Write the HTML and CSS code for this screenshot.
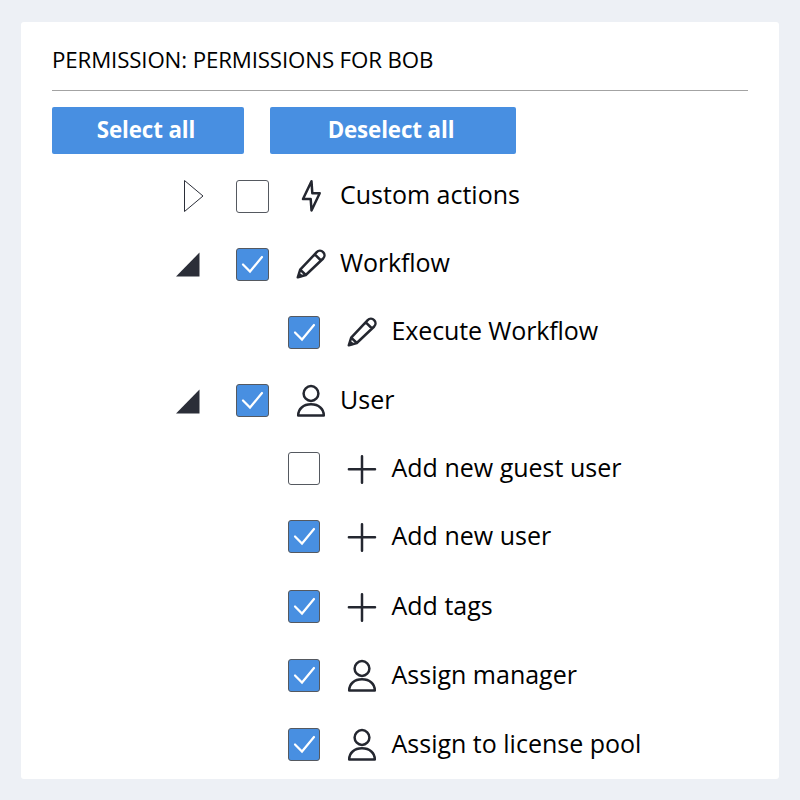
FILE: index.html
```html
<!DOCTYPE html>
<html lang="en">
<head>
<meta charset="utf-8">
<title>Permissions</title>
<link rel="stylesheet" href="styles.css">
</head>
<body>
<svg class="defs" aria-hidden="true">
  <symbol id="check" viewBox="0 0 33 33"><path d="M7 16.500 14 23.500 26 9"/></symbol>
  <symbol id="bolt" viewBox="0 0 34 34"><path d="M17.500 2.300 9 20H16.700L17.500 31.500 25.700 14.200H18.300Z"/></symbol>
  <symbol id="pencil" viewBox="0 0 34 34"><path d="M3.800 30.300 6.200 22.700 22.700 5.200A4.500 4.500 0 0 1 29.200 11.500L11.800 28ZM6.200 22.700 11.800 28M20.800 7.400 27 13.500M3.800 30.300 7.600 29.200 5 26.800Z"/></symbol>
  <symbol id="user" viewBox="0 0 34 34"><circle cx="17" cy="9.500" r="7.400"/><path d="M4.200 31.400C4.200 25 9.200 20.300 17 20.300S29.800 25 29.800 31.400Z"/></symbol>
  <symbol id="plus" viewBox="0 0 34 34"><path d="M17 4.200V30.700M3.900 17.300H30"/></symbol>
</svg>
<main class="card">
  <h1 class="title">PERMISSION: PERMISSIONS FOR BOB</h1>
  <div class="actions">
    <button class="btn btn-select">Select all</button>
    <button class="btn btn-deselect">Deselect all</button>
  </div>
  <ul class="tree">
    <li class="row">
      <svg class="toggle" viewBox="0 0 30 34"><path class="closed" d="M9.500 1.500V32.500L28 17Z"/></svg>
      <span class="box"></span>
      <svg class="icon"><use href="#bolt"/></svg>
      <span class="label">Custom actions</span>
    </li>
    <li class="row">
      <svg class="toggle" viewBox="0 0 30 34"><path class="open" d="M1 29.500H24.500V5.500Z"/></svg>
      <span class="box on"><svg><use href="#check"/></svg></span>
      <svg class="icon"><use href="#pencil"/></svg>
      <span class="label workflow">Workflow</span>
    </li>
    <li class="row child">
      <span class="box on"><svg><use href="#check"/></svg></span>
      <svg class="icon"><use href="#pencil"/></svg>
      <span class="label workflow">Execute Workflow</span>
    </li>
    <li class="row">
      <svg class="toggle" viewBox="0 0 30 34"><path class="open" d="M1 29.500H24.500V5.500Z"/></svg>
      <span class="box on"><svg><use href="#check"/></svg></span>
      <svg class="icon"><use href="#user"/></svg>
      <span class="label">User</span>
    </li>
    <li class="row child">
      <span class="box"></span>
      <svg class="icon"><use href="#plus"/></svg>
      <span class="label">Add new guest user</span>
    </li>
    <li class="row child">
      <span class="box on"><svg><use href="#check"/></svg></span>
      <svg class="icon"><use href="#plus"/></svg>
      <span class="label">Add new user</span>
    </li>
    <li class="row child tall">
      <span class="box on"><svg><use href="#check"/></svg></span>
      <svg class="icon"><use href="#plus"/></svg>
      <span class="label">Add tags</span>
    </li>
    <li class="row child tall">
      <span class="box on"><svg><use href="#check"/></svg></span>
      <svg class="icon"><use href="#user"/></svg>
      <span class="label">Assign manager</span>
    </li>
    <li class="row child tall">
      <span class="box on"><svg><use href="#check"/></svg></span>
      <svg class="icon"><use href="#user"/></svg>
      <span class="label">Assign to license pool</span>
    </li>
  </ul>
</main>
</body>
</html>
```
FILE: styles.css
```css
* { box-sizing: border-box; }
body {
  margin: 0;
  height: 800px;
  padding: 21.500px 21.500px 21.500px 21px;
  overflow: hidden;
  background: #edf0f5;
  color: #000;
  font-family: "Open Sans", sans-serif;
}
.defs { display: none; }
.card {
  height: 757px;
  padding: 0 31px;
  overflow: hidden;
  background: #fff;
  border-radius: 3px;
}
.title {
  margin: 0;
  height: 69px;
  padding-top: 21px;
  border-bottom: 1px solid #a3a3a3;
  font-size: 22.300px;
  font-weight: 400;
  letter-spacing: -0.140px;
  line-height: 34px;
  white-space: nowrap;
}
.actions {
  display: flex;
  gap: 26px;
  padding-top: 16px;
}
.btn {
  height: 47px;
  padding: 0 4px 0 0;
  border: 0;
  border-radius: 2px;
  background: #488fe1;
  color: #fff;
  font: 700 22.300px/1 "Open Sans", sans-serif;
  letter-spacing: -0.100px;
}
.btn-select { width: 192px; }
.btn-deselect { width: 246px; }
.tree {
  margin: 8.700px 0 0;
  padding: 0;
  list-style: none;
}
.row {
  display: flex;
  align-items: center;
  height: 68.100px;
  padding-left: 123px;
}
.child { padding-left: 236px; }
.tall { height: 69px; }
.row:not(.tall) + .tall { margin-top: 1.400px; }
.toggle {
  width: 30px;
  height: 34px;
  margin-right: 31px;
}
.closed { fill: #fff; stroke: #2b2e38; stroke-width: 1; }
.open { fill: #2b2e38; }
.box {
  width: 33px;
  height: 33px;
  border: 1px solid #555960;
  border-radius: 3px;
  background: #fff;
}
.child .box { width: 32px; }
.on { background: #488fe1; }
.box svg {
  display: block;
  width: 33px;
  height: 33px;
  margin: -1px;
  fill: none;
  stroke: #fff;
  stroke-width: 2.200;
  stroke-linecap: round;
}
.icon {
  width: 34px;
  height: 34px;
  margin: 0 12px 0 25px;
  fill: none;
  stroke: #242730;
  stroke-width: 2.500;
  stroke-linecap: round;
  stroke-linejoin: round;
}
.child .icon { margin: 0 12.500px 0 25px; }
.label {
  padding-bottom: 4px;
  font-size: 25px;
  line-height: 34px;
  white-space: nowrap;
}
.workflow { letter-spacing: -0.120px; }
```
